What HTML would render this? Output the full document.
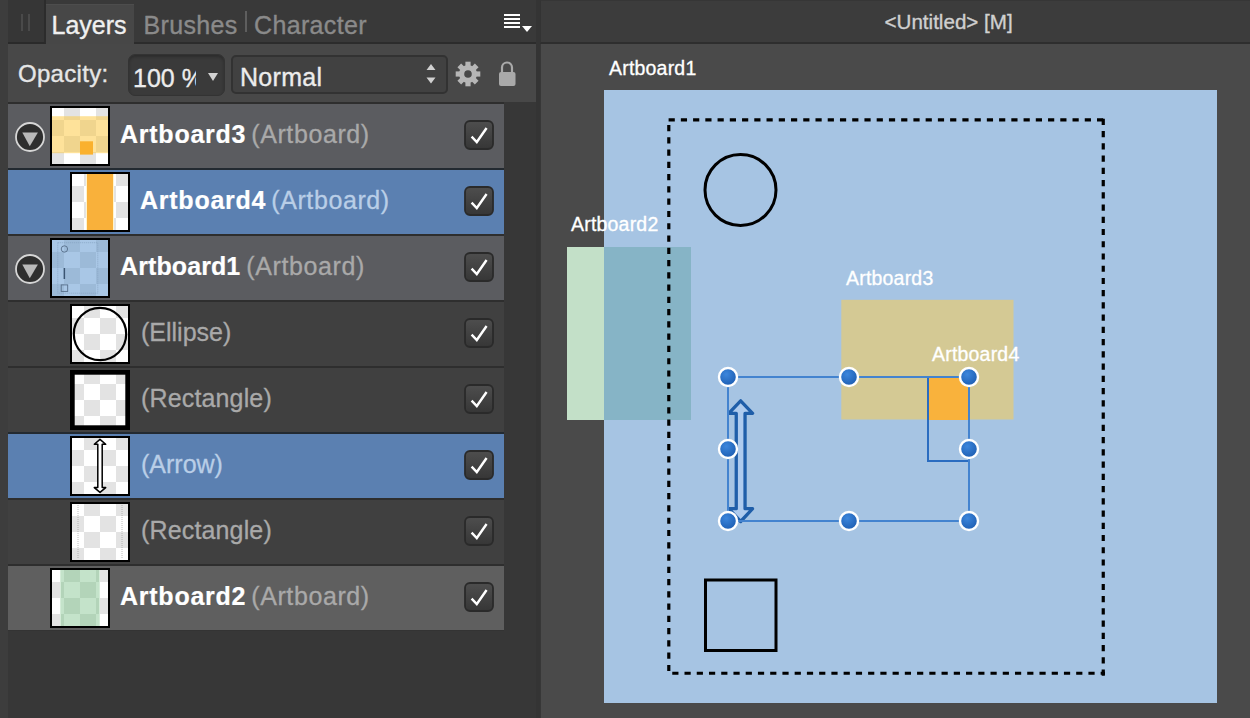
<!DOCTYPE html>
<html><head><meta charset="utf-8">
<style>
*{margin:0;padding:0;box-sizing:border-box}
html,body{width:1250px;height:718px;overflow:hidden;background:#4a4a4a;font-family:"Liberation Sans",sans-serif}
.a{position:absolute}
.ts{-webkit-text-stroke:0.35px currentColor}
#left{left:0;top:0;width:541px;height:718px;background:#373737}
#strip{left:0;top:0;width:8px;height:718px;background:#3d3d3d}
#tabbar{left:8px;top:0;width:528px;height:44px;background:#393939;border-bottom:2px solid #2c2c2c}
#grip{left:8px;top:0;width:38px;height:44px;background:#363636;border-right:2px solid #2c2c2c;border-bottom:2px solid #2a2a2a}
.tab{-webkit-text-stroke:0.35px currentColor;font-size:25px;letter-spacing:0.35px;top:11px;color:#8a8a8a;white-space:nowrap}
#tabact{left:46px;top:4px;width:88px;height:42px;background:#474747;border-top:1px solid #4d4d4d}
#optrow{left:8px;top:44px;width:528px;height:58px;background:#484848}
#sep{left:536px;top:0;width:4px;height:718px;background:#343434}
#title{left:540px;top:0;width:710px;height:44px;background:#3c3c3c;border-bottom:2px solid #2e2e2e;border-left:1px solid #333;border-top:1px solid #363636}
.row{left:8px;width:496px;height:66px;border-top:2px solid #2e2e2e}
.sel{background:#5b80b1;border-top-color:#232a31}
.thumb{width:60px;height:60px;border:2px solid #000;background-color:#fff;
 background-image:conic-gradient(#e3e3e3 25%,#fff 0 50%,#e3e3e3 0 75%,#fff 0);
 background-size:32px 32px;background-position:-4px -4px;overflow:hidden}
.thumb svg{position:absolute;left:0;top:0}
.name{font-size:25px;white-space:nowrap;-webkit-text-stroke:0.3px currentColor}
.name .b{-webkit-text-stroke:0.2px currentColor}
.b{font-weight:bold;color:#fff;letter-spacing:0.75px;margin-right:5px}
.ab{letter-spacing:0.6px}
.g{color:#a9a9a9}
.bl{color:#b9cee7}
.chk{width:30px;height:30px}
.disc{width:30px;height:30px}
</style></head><body>
<div class="a" id="left"></div>
<div class="a" id="strip"></div>
<div class="a" id="tabbar"></div>
<div class="a" id="grip"></div>
<div class="a" style="left:21px;top:14px;width:2px;height:17px;background:#4a4a4a"></div>
<div class="a" style="left:28px;top:14px;width:2px;height:17px;background:#4a4a4a"></div>
<div class="a" id="tabact"></div>
<div class="a tab" style="left:51.5px;color:#f0f0f0;letter-spacing:0">Layers</div>
<div class="a tab" style="left:143.5px">Brushes</div>
<div class="a" style="left:245px;top:11px;width:2px;height:21px;background:#5e5e5e"></div>
<div class="a tab" style="left:254px">Character</div>
<svg class="a" style="left:500px;top:10px" width="36" height="26" viewBox="0 0 36 26">
 <g fill="#fff"><rect x="4" y="4" width="16" height="2"/><rect x="4" y="8" width="16" height="2"/><rect x="4" y="12" width="16" height="2"/><rect x="4" y="16" width="16" height="2"/></g>
 <path d="M22 16 L32 16 L27 22 Z" fill="#fff"/>
</svg>

<div class="a" id="optrow"></div>
<div class="a ts" style="left:18px;top:60px;font-size:24px;color:#e6e6e6;letter-spacing:0.3px;white-space:nowrap">Opacity:</div>
<div class="a" style="left:128px;top:54px;width:97px;height:42px;border-radius:7px;background:#3a3a3a;border:1px solid #333;box-shadow:inset 0 2px 3px rgba(0,0,0,0.25);overflow:hidden">
 <div class="a ts" style="left:4px;top:9px;width:63px;height:32px;overflow:hidden;font-size:25px;color:#ececec;white-space:nowrap">100 %</div>
 <svg class="a" style="left:78px;top:17px" width="12" height="10"><path d="M1 1 L11 1 L6 9 Z" fill="#d2d2d2"/></svg>
</div>
<div class="a" style="left:231px;top:55px;width:217px;height:39px;border-radius:5px;background:#414141;border:2px solid #323232"></div>
<div class="a ts" style="left:240px;top:63px;font-size:25px;letter-spacing:0.3px;color:#ececec;white-space:nowrap">Normal</div>
<svg class="a" style="left:424px;top:62px" width="14" height="24"><path d="M7 2 L11.5 8 L2.5 8 Z M2.5 15.5 L11.5 15.5 L7 21.5 Z" fill="#d0d0d0"/></svg>
<svg class="a" style="left:454px;top:60px" width="28" height="28" viewBox="-14 -14 28 28">
 <g fill="#b6b6b6">
  <circle r="9"/>
  <g id="tooth"><rect x="-2.6" y="-12.3" width="5.2" height="6"/></g>
  <use href="#tooth" transform="rotate(45)"/><use href="#tooth" transform="rotate(90)"/><use href="#tooth" transform="rotate(135)"/>
  <use href="#tooth" transform="rotate(180)"/><use href="#tooth" transform="rotate(225)"/><use href="#tooth" transform="rotate(270)"/><use href="#tooth" transform="rotate(315)"/>
 </g>
 <circle r="3.8" fill="#484848"/>
</svg>
<svg class="a" style="left:496px;top:60px" width="22" height="28" viewBox="0 0 22 28">
 <path d="M6 12 V7.5 A5 5 0 0 1 16 7.5 V12" fill="none" stroke="#a9a9a9" stroke-width="2.2"/>
 <rect x="3" y="12" width="16.5" height="14" rx="2" fill="#a9a9a9"/>
</svg>

<div class="a" id="sep"></div>
<div class="a" id="title"></div>
<div class="a ts" style="left:884.5px;top:9.5px;font-size:20.6px;color:#d0d0d0;white-space:nowrap">&lt;Untitled&gt; [M]</div>

<!-- rows -->
<div class="a row" style="top:102px;background:#5b5c60"></div>
<div class="a row sel" style="top:168px"></div>
<div class="a row" style="top:234px;background:#5b5c60"></div>
<div class="a row" style="top:300px;background:#404040"></div>
<div class="a row" style="top:366px;background:#404040"></div>
<div class="a row sel" style="top:432px"></div>
<div class="a row" style="top:498px;background:#404040"></div>
<div class="a row" style="top:564px;background:#5f5f5f;height:67px;border-bottom:1px solid #333"></div>

<svg class="a disc" style="left:15px;top:121.5px" viewBox="0 0 30 30"><circle cx="15" cy="15" r="14" fill="#2e2e2e" stroke="#d6d6d6" stroke-width="1.8"/><path d="M7.3 10.4 L22.9 10.4 L14.8 24.3 Z" fill="#b9b9b9"/></svg>
<svg class="a disc" style="left:15px;top:253.5px" viewBox="0 0 30 30"><circle cx="15" cy="15" r="14" fill="#2e2e2e" stroke="#d6d6d6" stroke-width="1.8"/><path d="M7.3 10.4 L22.9 10.4 L14.8 24.3 Z" fill="#b9b9b9"/></svg>

<!-- thumbs -->
<svg width="0" height="0" style="position:absolute">
 <defs>
  <pattern id="pY" patternUnits="userSpaceOnUse" x="-4" y="-4" width="32" height="32"><rect width="32" height="32" fill="#fee29a"/><rect x="16" width="16" height="16" fill="#f0d58e"/><rect y="16" width="16" height="16" fill="#f0d58e"/></pattern>
  <pattern id="pB" patternUnits="userSpaceOnUse" x="-4" y="-4" width="32" height="32"><rect width="32" height="32" fill="#a9c7e6"/><rect x="16" width="16" height="16" fill="#9cbad8"/><rect y="16" width="16" height="16" fill="#9cbad8"/></pattern>
  <pattern id="pG" patternUnits="userSpaceOnUse" x="-4" y="-4" width="32" height="32"><rect width="32" height="32" fill="#c4e3ca"/><rect x="16" width="16" height="16" fill="#b3d4b9"/><rect y="16" width="16" height="16" fill="#b3d4b9"/></pattern>
 </defs>
</svg>
<div class="a thumb" style="left:50px;top:106px">
 <svg width="56" height="56" viewBox="0 0 56 56">
  <rect x="0" y="8.2" width="56" height="37" fill="url(#pY)"/>
  <rect x="28" y="33.3" width="13" height="13.3" fill="#fab12e"/>
 </svg>
</div>
<div class="a thumb" style="left:70px;top:172px">
 <svg width="56" height="56" viewBox="0 0 56 56">
  <rect x="14" y="0" width="28" height="56" fill="#fff4cc"/>
  <rect x="15" y="0" width="26" height="56" fill="#f9b13b"/>
 </svg>
</div>
<div class="a thumb" style="left:50px;top:238px">
 <svg width="56" height="56" viewBox="0 0 56 56">
  <rect width="56" height="56" fill="url(#pB)"/>
  <rect x="5.8" y="2.7" width="40" height="50.5" fill="none" stroke="#7f9cbc" stroke-width="0.7" stroke-dasharray="1 1"/>
  <circle cx="12.4" cy="9" r="3.2" fill="none" stroke="#566d88" stroke-width="0.9"/>
  <rect x="9.2" y="44.9" width="6.5" height="6.5" fill="none" stroke="#566d88" stroke-width="0.9"/>
  <rect x="11.6" y="28" width="1.5" height="11" fill="#3b5572"/>
 </svg>
</div>
<div class="a thumb" style="left:70px;top:304px">
 <svg width="56" height="56" viewBox="0 0 56 56"><circle cx="28" cy="28" r="26.2" fill="none" stroke="#000" stroke-width="2.2"/></svg>
</div>
<div class="a thumb" style="left:70px;top:370px">
 <svg width="56" height="56" viewBox="0 0 56 56"><rect x="1.3" y="1.3" width="53.4" height="53.4" fill="none" stroke="#000" stroke-width="2.8"/></svg>
</div>
<div class="a thumb" style="left:70px;top:436px">
 <svg width="56" height="56" viewBox="0 0 56 56"><path d="M28 1.4 L33.7 6.2 L30.2 6.2 L30.2 49.6 L33.7 49.6 L28 54.4 L22.3 49.6 L25.8 49.6 L25.8 6.2 L22.3 6.2 Z" fill="#fff" stroke="#000" stroke-width="1.5" stroke-linejoin="round"/></svg>
</div>
<div class="a thumb" style="left:70px;top:502px">
 <svg width="56" height="56" viewBox="0 0 56 56"><g stroke="#8a8a8a" stroke-width="0.8" stroke-dasharray="1 1" opacity="0.7"><line x1="6" y1="1" x2="6" y2="55"/><line x1="50" y1="1" x2="50" y2="55"/></g></svg>
</div>
<div class="a thumb" style="left:50px;top:568px">
 <svg width="56" height="56" viewBox="0 0 56 56">
  <rect x="8" y="0" width="40" height="56" fill="#d4ecd8"/>
  <rect x="9" y="0" width="38" height="56" fill="url(#pG)"/>
 </svg>
</div>

<div class="a name" style="left:120px;top:120px"><span class="b">Artboard3</span><span class="g ab">(Artboard)</span></div>
<div class="a name" style="left:140px;top:186px"><span class="b">Artboard4</span><span class="g ab bl">(Artboard)</span></div>
<div class="a name" style="left:120px;top:252px"><span class="b" style="letter-spacing:0.1px;margin-right:6px">Artboard1</span><span class="g ab">(Artboard)</span></div>
<div class="a name g" style="left:141px;top:318px">(Ellipse)</div>
<div class="a name g" style="left:141px;top:384px;letter-spacing:0.15px">(Rectangle)</div>
<div class="a name bl" style="left:141px;top:450px">(Arrow)</div>
<div class="a name g" style="left:141px;top:516px;letter-spacing:0.15px">(Rectangle)</div>
<div class="a name" style="left:120px;top:582px"><span class="b">Artboard2</span><span class="g ab">(Artboard)</span></div>

<svg width="0" height="0" style="position:absolute">
 <defs>
  <linearGradient id="cg" x1="0" y1="0" x2="0" y2="1"><stop offset="0" stop-color="#4e4e4e"/><stop offset="1" stop-color="#363636"/></linearGradient>
  <g id="chk">
   <rect x="1" y="1" width="28" height="28" rx="5" fill="url(#cg)" stroke="#2a2a2a" stroke-width="1.8"/>
   <path d="M7.6 16.6 L12.8 22 L22.6 8" fill="none" stroke="#fff" stroke-width="2.4"/>
  </g>
 </defs>
</svg>
<svg class="a chk" style="left:464px;top:120px"><use href="#chk"/></svg>
<svg class="a chk" style="left:464px;top:186px"><use href="#chk"/></svg>
<svg class="a chk" style="left:464px;top:252px"><use href="#chk"/></svg>
<svg class="a chk" style="left:464px;top:318px"><use href="#chk"/></svg>
<svg class="a chk" style="left:464px;top:384px"><use href="#chk"/></svg>
<svg class="a chk" style="left:464px;top:450px"><use href="#chk"/></svg>
<svg class="a chk" style="left:464px;top:516px"><use href="#chk"/></svg>
<svg class="a chk" style="left:464px;top:582px"><use href="#chk"/></svg>

<!-- canvas -->
<svg class="a" style="left:0;top:0" width="1250" height="718" viewBox="0 0 1250 718">
 <defs>
  <radialGradient id="hg" cx="0.4" cy="0.35" r="0.7"><stop offset="0" stop-color="#3c86dc"/><stop offset="1" stop-color="#1c5cb0"/></radialGradient>
  <g id="h"><circle r="9" fill="url(#hg)" stroke="#fff" stroke-width="2.4"/></g>
 </defs>
 <rect x="604" y="90" width="613" height="613" fill="#a6c4e3"/>
 <text x="609" y="75" font-family="Liberation Sans" font-size="19.5" fill="#fff" stroke="#fff" stroke-width="0.3" letter-spacing="0.2">Artboard1</text>
 
 <circle cx="740.5" cy="190" r="35.5" fill="none" stroke="#000" stroke-width="3"/>
 <rect x="705.5" y="580" width="70.5" height="70.5" fill="none" stroke="#000" stroke-width="3"/>
 <rect x="567" y="247" width="37" height="173" fill="#c3e0c8"/>
 <rect x="604" y="247" width="87" height="173" fill="#86b4c6"/>
 <g stroke="#000" stroke-width="3.2" fill="none">
  <line x1="668.6" y1="119.85" x2="1104.5" y2="119.85" stroke-dasharray="6.2 6.04"/>
  <line x1="1103.25" y1="118.76" x2="1103.25" y2="676" stroke-dasharray="6.2 6.04"/>
  <line x1="672.26" y1="673.25" x2="1105" y2="673.25" stroke-dasharray="6.2 6.04"/>
  <line x1="668.8" y1="125" x2="668.8" y2="675" stroke-dasharray="6.2 6.07"/>
 </g>
 <text x="571" y="231" font-family="Liberation Sans" font-size="19.5" fill="#fff" stroke="#fff" stroke-width="0.3" letter-spacing="0.2">Artboard2</text>
 <rect x="841.3" y="299.8" width="172.2" height="119.7" fill="#d4c994"/>
 <text x="846" y="285" font-family="Liberation Sans" font-size="19.5" fill="#fff" stroke="#fff" stroke-width="0.3" letter-spacing="0.2">Artboard3</text>
 <rect x="929" y="378" width="40" height="42" fill="#f9b23c"/>
 <text x="932" y="361" font-family="Liberation Sans" font-size="19.5" fill="#fff" stroke="#fff" stroke-width="0.3" letter-spacing="0.2">Artboard4</text>
 <path d="M740.65 400.8 L752.6 413.3 L745.05 413.3 L745.05 508.7 L752.6 508.7 L740.65 521.5 L728.7 508.7 L736.25 508.7 L736.25 413.3 L728.7 413.3 Z" fill="#aecbee" stroke="#1f5ea9" stroke-width="3.3" stroke-linejoin="round"/>
 <rect x="928" y="377" width="41" height="84" fill="none" stroke="#2a6cc0" stroke-width="2"/>
 <rect x="728" y="377" width="241" height="144" fill="none" stroke="#4383cf" stroke-width="2"/>
 <use href="#h" x="728" y="377"/><use href="#h" x="849" y="377"/><use href="#h" x="969" y="377"/>
 <use href="#h" x="728" y="449"/><use href="#h" x="969" y="449"/>
 <use href="#h" x="728" y="521"/><use href="#h" x="849" y="521"/><use href="#h" x="969" y="521"/>
</svg>
</body></html>
